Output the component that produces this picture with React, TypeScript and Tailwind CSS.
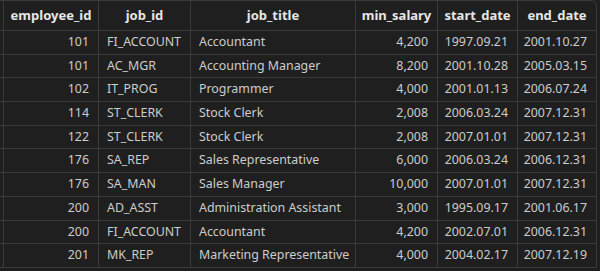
import React from 'react';

type Row = {
  id: number;
  jobId: string;
  title: string;
  salary: string;
  start: string;
  end: string;
};

const rows: Row[] = [
  { id: 101, jobId: 'FI_ACCOUNT', title: 'Accountant', salary: '4,200', start: '1997.09.21', end: '2001.10.27' },
  { id: 101, jobId: 'AC_MGR', title: 'Accounting Manager', salary: '8,200', start: '2001.10.28', end: '2005.03.15' },
  { id: 102, jobId: 'IT_PROG', title: 'Programmer', salary: '4,000', start: '2001.01.13', end: '2006.07.24' },
  { id: 114, jobId: 'ST_CLERK', title: 'Stock Clerk', salary: '2,008', start: '2006.03.24', end: '2007.12.31' },
  { id: 122, jobId: 'ST_CLERK', title: 'Stock Clerk', salary: '2,008', start: '2007.01.01', end: '2007.12.31' },
  { id: 176, jobId: 'SA_REP', title: 'Sales Representative', salary: '6,000', start: '2006.03.24', end: '2006.12.31' },
  { id: 176, jobId: 'SA_MAN', title: 'Sales Manager', salary: '10,000', start: '2007.01.01', end: '2007.12.31' },
  { id: 200, jobId: 'AD_ASST', title: 'Administration Assistant', salary: '3,000', start: '1995.09.17', end: '2001.06.17' },
  { id: 200, jobId: 'FI_ACCOUNT', title: 'Accountant', salary: '4,200', start: '2002.07.01', end: '2006.12.31' },
  { id: 201, jobId: 'MK_REP', title: 'Marketing Representative', salary: '4,000', start: '2004.02.17', end: '2007.12.19' },
];

const cols = 'grid grid-cols-[4px_95px_92px_165px_82px_80px_79px]';
const cell = 'border-r border-[#3a3a3a] px-2 flex items-center whitespace-nowrap overflow-hidden';

const App: React.FC = () => {
  return (
    <div
      className="w-[600px] h-[271px] bg-[#1f1f1f] overflow-hidden text-[12.4px] text-[#cccccc]"
      style={{ fontFamily: '"Noto Sans", "Open Sans", sans-serif' }}
    >
      <div className="w-[597px] border-t border-[#3a3a3a] rounded-tr-[6px]">
        {/* header */}
        <div className={`${cols} h-[30px] border-b border-[#3a3a3a] font-bold text-[13px] text-[#e6e6e6]`}>
          <div className="border-r border-[#3a3a3a]" />
          <div className={`${cell} justify-center`}>employee_id</div>
          <div className={`${cell} justify-center`}>job_id</div>
          <div className={`${cell} justify-center`}>job_title</div>
          <div className={`${cell} justify-center`}>min_salary</div>
          <div className={`${cell} justify-center`}>start_date</div>
          <div className={`${cell} justify-center rounded-tr-[6px]`}>end_date</div>
        </div>

        {rows.map((r, i) => (
          <div key={i} className={`${cols} h-[23.7px] border-b border-[#3a3a3a]`}>
            <div className="border-r border-[#3a3a3a]" />
            <div className={`${cell} justify-end pr-[9px]`}>{r.id}</div>
            <div className={cell}>{r.jobId}</div>
            <div className={cell}>{r.title}</div>
            <div className={`${cell} justify-end pr-[9px]`}>{r.salary}</div>
            <div className={`${cell} justify-end pr-[9px]`}>{r.start}</div>
            <div className={`${cell} justify-end pr-[9px]`}>{r.end}</div>
          </div>
        ))}
      </div>
    </div>
  );
};

export default App;
